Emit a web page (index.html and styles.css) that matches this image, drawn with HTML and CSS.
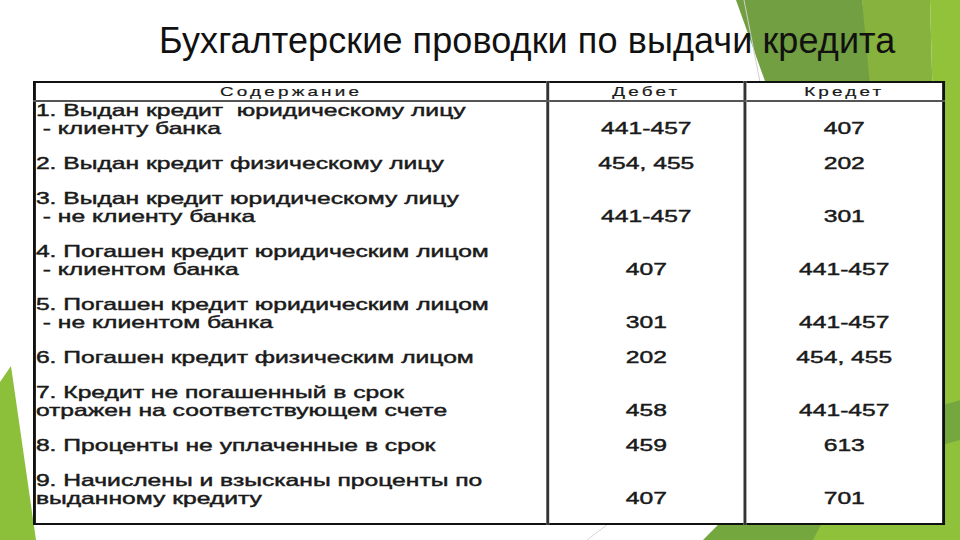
FILE: index.html
```
<!DOCTYPE html>
<html lang="ru">
<head>
<meta charset="utf-8">
<title>Бухгалтерские проводки по выдачи кредита</title>
<link rel="stylesheet" href="styles.css">
</head>
<body>
<svg class="deco" width="960" height="540" viewBox="0 0 960 540" aria-hidden="true">
  <polygon points="736,0 862,0 885,120 776,112" fill="#729f41"/>
  <polygon points="862,0 930,0 945,540 890,300" fill="#86b23d"/>
  <polygon points="930,0 960,0 960,540 945,540" fill="#92c23a"/>
  <polygon points="703,540 790,452 960,400 960,540" fill="#74a83f"/>
  <polygon points="813,540 850,470 960,440 960,540" fill="#8fc13a"/>
  <polygon points="11,366 36,540 0,540 0,382" fill="#8cbf3a"/>
  <line x1="744" y1="0" x2="760" y2="82" stroke="#cfcfcf" stroke-width="1"/>
  <line x1="587" y1="540" x2="612" y2="521" stroke="#d6d6d6" stroke-width="1"/>
</svg>
<main class="slide">
  <h1 class="title">Бухгалтерские проводки по выдачи кредита</h1>
  <div class="table-wrap">
    <table class="ledger">
      <colgroup>
        <col class="c-text">
        <col class="c-num">
        <col class="c-num2">
      </colgroup>
      <thead>
        <tr><th>Содержание</th><th>Дебет</th><th>Кредет</th></tr>
      </thead>
      <tbody>
        <tr><td>1. Выдан кредит&nbsp; юридическому лицу<br>&nbsp;- клиенту банка</td><td class="num">441-457</td><td class="num">407</td></tr>
        <tr><td>2. Выдан кредит физическому лицу</td><td class="num">454, 455</td><td class="num">202</td></tr>
        <tr><td>3. Выдан кредит юридическому лицу<br>&nbsp;- не клиенту банка</td><td class="num">441-457</td><td class="num">301</td></tr>
        <tr><td>4. Погашен кредит юридическим лицом<br>&nbsp;- клиентом банка</td><td class="num">407</td><td class="num">441-457</td></tr>
        <tr><td>5. Погашен кредит юридическим лицом<br>&nbsp;- не клиентом банка</td><td class="num">301</td><td class="num">441-457</td></tr>
        <tr><td>6. Погашен кредит физическим лицом</td><td class="num">202</td><td class="num">454, 455</td></tr>
        <tr><td>7. Кредит не погашенный в срок<br>отражен на соответствующем счете</td><td class="num">458</td><td class="num">441-457</td></tr>
        <tr><td>8. Проценты не уплаченные в срок</td><td class="num">459</td><td class="num">613</td></tr>
        <tr class="last"><td>9. Начислены и взысканы проценты по<br>выданному кредиту</td><td class="num">407</td><td class="num">701</td></tr>
      </tbody>
    </table>
  </div>
</main>
</body>
</html>
```
FILE: styles.css
```
html, body {
  margin: 0;
  padding: 0;
  background: #ffffff;
}
body {
  width: 960px;
  height: 540px;
  overflow: hidden;
  position: relative;
  font-family: "Liberation Sans", Arial, sans-serif;
}
.deco {
  position: absolute;
  left: 0;
  top: 0;
  z-index: 0;
}
.slide {
  position: relative;
  z-index: 1;
  display: flex;
  flex-direction: column;
}
.title {
  margin: 0;
  height: 81px;
  box-sizing: border-box;
  padding: 20px 0 0 159px;
  font-size: 36px;
  line-height: 42px;
  font-weight: normal;
  letter-spacing: 0.1px;
  color: #111111;
  white-space: nowrap;
}
.table-wrap {
  padding-left: 33px;
}
.ledger {
  width: 627px;
  table-layout: fixed;
  border-collapse: collapse;
  background: #ffffff;
  transform: scaleX(1.45);
  transform-origin: 0 0;
  border: 2px solid #111111;
  color: #1a1a1a;
}
.c-text { width: 354px; }
.c-num { width: 136px; }
.c-num2 { width: 137px; }
.ledger th {
  font-weight: normal;
  font-size: 13px;
  letter-spacing: 2.2px;
  line-height: 17px;
  height: 17px;
  padding: 0;
  text-align: center;
  border-bottom: 2px solid #555555;
  border-left: 2px solid #333333;
  -webkit-text-stroke: 0.2px #1a1a1a;
}
.ledger td {
  font-size: 17px;
  line-height: 18px;
  padding: 0 0 17px 0;
  vertical-align: top;
  border-left: 2px solid #333333;
  white-space: nowrap;
  -webkit-text-stroke: 0.45px #1a1a1a;
}
.ledger tr.last td {
  padding-bottom: 15px;
}
.ledger th:first-child,
.ledger td:first-child {
  border-left: none;
}
.ledger td.num {
  text-align: center;
  vertical-align: bottom;
}
```
